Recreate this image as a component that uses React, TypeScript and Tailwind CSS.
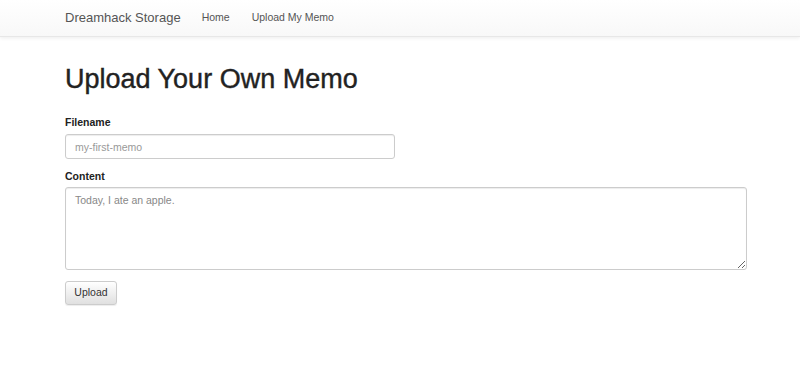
import React from 'react'

export default function App() {
  return (
    <div className="min-h-[391px] bg-white text-[#333] [font-family:'Liberation_Sans',Arial,sans-serif]">
      {/* Navbar */}
      <nav className="h-[37px] bg-gradient-to-b from-white to-[#f8f8f8] border-b border-[#e7e7e7] shadow-[0_1px_4px_rgba(0,0,0,0.08)]">
        <div className="pl-[65px] flex items-center h-full">
          <a className="text-[13px] text-[#555] mr-[21px]">Dreamhack Storage</a>
          <a className="text-[10.5px] text-[#555] mr-[22px]">Home</a>
          <a className="text-[10.5px] text-[#555]">Upload My Memo</a>
        </div>
      </nav>

      {/* Content */}
      <div className="pl-[65px] pr-[53px]">
        <h1 className="text-[27px] leading-[1.1] font-medium text-[#222] mt-[28px] mb-[20px] [-webkit-text-stroke:0.4px_#222]">Upload Your Own Memo</h1>

        <form className="flex flex-col">
          <label className="text-[10.5px] font-bold text-[#222] mb-[4px]">Filename</label>
          <input
            type="text"
            placeholder="my-first-memo"
            className="w-[330px] h-[25px] px-[9px] text-[10.5px] border border-[#ccc] rounded-[3px] shadow-[inset_0_1px_1px_rgba(0,0,0,0.075)] placeholder:text-[#999] outline-none mb-[10px]"
          />

          <label className="text-[10.5px] font-bold text-[#222] mb-[2px]">Content</label>
          <textarea
            placeholder="Today, I ate an apple."
            className="w-full h-[83px] px-[9px] py-[5px] text-[10.5px] border border-[#ccc] rounded-[3px] shadow-[inset_0_1px_1px_rgba(0,0,0,0.075)] placeholder:text-[#888] outline-none mb-[9px] resize-y"
          />

          <div>
            <button
              type="button"
              className="w-[52px] h-[24px] text-[10.5px] text-[#333] border border-[#ccc] rounded-[3px] bg-gradient-to-b from-white to-[#e0e0e0] shadow-[inset_0_1px_0_rgba(255,255,255,0.15),0_1px_1px_rgba(0,0,0,0.075)]"
            >
              Upload
            </button>
          </div>
        </form>
      </div>
    </div>
  )
}
